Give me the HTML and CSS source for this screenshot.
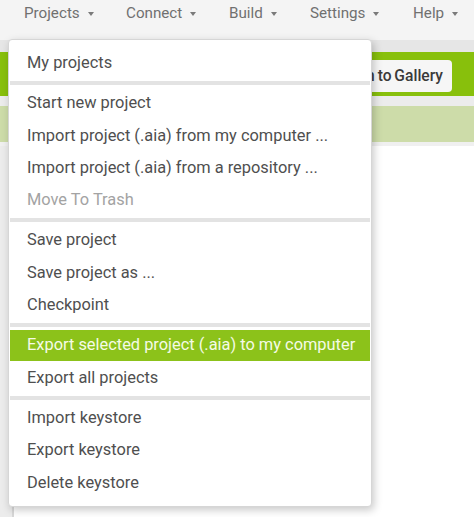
FILE: index.html
```html
<!DOCTYPE html>
<html>
<head>
<meta charset="utf-8">
<link rel="stylesheet" href="styles.css">
</head>
<body>
<div class="page">
  <nav class="topnav">
    <span class="nav-item projects">Projects <span class="caret"></span></span>
    <span class="nav-item connect">Connect <span class="caret"></span></span>
    <span class="nav-item build">Build <span class="caret"></span></span>
    <span class="nav-item settings">Settings <span class="caret"></span></span>
    <span class="nav-item help">Help <span class="caret"></span></span>
  </nav>
  <div class="gray-strip"></div>
  <div class="toolbar">
    <button class="gallery-btn">Publish to Gallery</button>
  </div>
  <div class="gray-strip small"></div>
  <div class="subbar"></div>
  <div class="content">
    <div class="side"></div>
    <div class="panel"></div>
  </div>

  <div class="menu">
    <div class="menu-item">My projects</div>
    <div class="sep"></div>
    <div class="menu-item">Start new project</div>
    <div class="menu-item">Import project (.aia) from my computer ...</div>
    <div class="menu-item">Import project (.aia) from a repository ...</div>
    <div class="menu-item disabled">Move To Trash</div>
    <div class="sep"></div>
    <div class="menu-item">Save project</div>
    <div class="menu-item">Save project as ...</div>
    <div class="menu-item">Checkpoint</div>
    <div class="sep"></div>
    <div class="menu-item active">Export selected project (.aia) to my computer</div>
    <div class="menu-item">Export all projects</div>
    <div class="sep"></div>
    <div class="menu-item">Import keystore</div>
    <div class="menu-item">Export keystore</div>
    <div class="menu-item">Delete keystore</div>
  </div>
</div>
</body>
</html>
```

FILE: styles.css
```css
* { box-sizing: border-box; }
html, body {
  margin: 0;
  padding: 0;
  background: #ffffff;
  font-family: Roboto, "Liberation Sans", sans-serif;
}
.page {
  position: relative;
  width: 474px;
  height: 517px;
  overflow: hidden;
  display: flex;
  flex-direction: column;
}
.topnav {
  height: 40px;
  flex: none;
  background: #f4f4f4;
  display: flex;
  align-items: center;
  padding-left: 24px;
  font-size: 15.2px;
  color: #707070;
}
.nav-item {
  flex: none;
  display: flex;
  align-items: center;
  padding-bottom: 14px;
  white-space: nowrap;
}
.nav-item.projects { width: 102px; }
.nav-item.connect { width: 103px; }
.nav-item.build { width: 81px; }
.nav-item.settings { width: 103px; }
.caret {
  display: inline-block;
  width: 0;
  height: 0;
  margin-left: 8px;
  border-left: 3px solid transparent;
  border-right: 3px solid transparent;
  border-top: 4px solid #7a7a7a;
  margin-top: 1px;
}
.gray-strip {
  height: 12px;
  flex: none;
  background: #e6e6e6;
}
.gray-strip.small { height: 10px; background: #ececec; }
.toolbar {
  height: 44px;
  flex: none;
  background: #88c00c;
  display: flex;
  align-items: center;
  justify-content: flex-end;
  padding-right: 22px;
}
.gallery-btn {
  height: 32px;
  margin-top: 4px;
  padding: 0 9px 0 14px;
  border: none;
  border-radius: 4px;
  background: #f6f6f6;
  color: #3a3a3a;
  font-family: Roboto, "Liberation Sans", sans-serif;
  font-size: 15.6px;
  font-weight: 500;
  word-spacing: -1px;
}
.subbar {
  height: 40px;
  flex: none;
  background: #cddca9;
  border-bottom: 4px solid #f0f0f0;
}
.content {
  flex: 1;
  display: flex;
}
.side {
  width: 14px;
  background: #ececec;
  border-right: 2px solid #d8d8d8;
}
.panel { flex: 1; background: #ffffff; }

.menu {
  position: absolute;
  left: 8px;
  top: 39px;
  width: 364px;
  height: 468px;
  background: #ffffff;
  border: 1px solid #d6d6d6;
  border-radius: 4px;
  box-shadow: 2px 3px 8px rgba(0,0,0,0.22);
  padding: 7px 1px 0 1px;
}
.menu-item {
  height: 32.3px;
  line-height: 32.3px;
  padding-left: 17px;
  font-size: 16.4px;
  color: #4f4f4f;
  white-space: nowrap;
}
.menu-item.disabled { color: #a3a3a3; }
.menu-item.active {
  background: #8cc21a;
  background-clip: padding-box;
  color: #f5fbe6;
  border-top: 1.5px solid transparent;
  border-bottom: 1.5px solid transparent;
  line-height: 29.3px;
}
.sep {
  height: 4px;
  margin: 2px 0;
  background: #e3e3e3;
}
```
